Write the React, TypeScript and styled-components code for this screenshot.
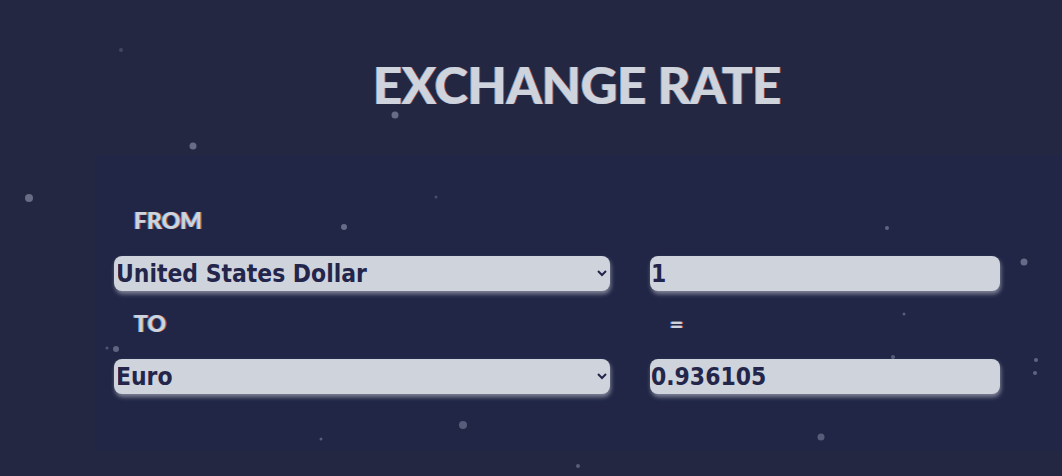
import * as React from "react";
import styled, { createGlobalStyle } from "styled-components";

// global
const GlobalStyle = createGlobalStyle`
  html, body {
    margin: 0;
    padding: 0;
    background: #242742;
    overflow: hidden;
  }
  #root {
    min-height: 476px;
  }
`;

// styles
const PageStyle = styled.main`
  position: relative;
  width: 1062px;
  height: 476px;
  padding-left: 95px;
  box-sizing: border-box;
  overflow: hidden;
`;

const TitleStyle = styled.h1`
  width: 964px;
  margin: 54px 0 0;
  font-family: Lato, "Liberation Sans", sans-serif;
  font-weight: 900;
  font-size: 51px;
  letter-spacing: -0.5px;
  line-height: 61px;
  text-align: center;
  color: #cfd3dc;
  text-shadow: -1px 0 #5a9bd8, 1px 0 #b0503a;
  position: relative;
  z-index: 1;
`;

const CardStyle = styled.section`
  position: relative;
  z-index: 1;
  width: 1000px;
  height: 295px;
  margin-top: 40px;
  padding: 51px 0 0 19px;
  box-sizing: border-box;
  background: #212646;
  display: grid;
  grid-template-columns: 496px 350px;
  column-gap: 40px;
  align-content: start;
`;

const LabelStyle = styled.div<{ $top?: number }>`
  margin: ${(p) => p.$top ?? 0}px 0 22px 20px;
  font-family: Lato, "Liberation Sans", sans-serif;
  font-weight: 900;
  font-size: 23px;
  line-height: 28px;
  height: 28px;
  color: #cfd3dc;
  text-shadow: -1px 0 #5a9bd8, 1px 0 #b0503a;
`;

const fieldCss = `
  width: 100%;
  height: 35px;
  box-sizing: border-box;
  border: none;
  border-radius: 8px;
  background-color: #cfd3dc;
  color: #23264a;
  font-family: "DejaVu Sans Condensed", "DejaVu Sans", Verdana, sans-serif;
  font-stretch: condensed;
  font-weight: bold;
  font-size: 24.4px;
  padding: 0;
  box-shadow: 1px 3px 4px #7f8296;
  outline: none;
`;

const SelectStyle = styled.select`
  ${fieldCss}
  padding-right: 4px;
  text-indent: -2px;
`;

const InputStyle = styled.input`
  ${fieldCss}
  padding-left: 1px;
`;

const StarStyle = styled.span<{ $size: number; $alpha: number }>`
  position: absolute;
  width: ${(p) => p.$size}px;
  height: ${(p) => p.$size}px;
  border-radius: 50%;
  background: rgba(190, 194, 214, ${(p) => p.$alpha});
  transform: translate(-50%, -50%);
  z-index: 2;
`;

const stars: [number, number, number, number][] = [
  [121, 50, 4, 0.2],
  [193, 146, 7, 0.45],
  [29, 198, 8, 0.45],
  [395, 115, 7, 0.45],
  [344, 227, 6, 0.45],
  [436, 197, 3, 0.25],
  [887, 228, 4, 0.4],
  [1024, 262, 7, 0.45],
  [904, 314, 3, 0.35],
  [893, 357, 4, 0.35],
  [1036, 360, 4, 0.4],
  [1035, 373, 4, 0.4],
  [116, 349, 6, 0.4],
  [107, 348, 3, 0.3],
  [463, 425, 8, 0.35],
  [321, 439, 3, 0.35],
  [578, 466, 4, 0.35],
  [821, 437, 7, 0.35],
];

// markup
const App = () => {
  const [from, setFrom] = React.useState("USD");
  const [to, setTo] = React.useState("EUR");
  const [amount, setAmount] = React.useState("1");
  const result = "0.936105";

  return (
    <>
      <GlobalStyle />
      <PageStyle>
        {stars.map(([x, y, s, a], i) => (
          <StarStyle key={i} $size={s} $alpha={a} style={{ left: x, top: y }} />
        ))}
        <TitleStyle>EXCHANGE RATE</TitleStyle>
        <CardStyle>
          <LabelStyle>FROM</LabelStyle>
          <div />
          <SelectStyle value={from} onChange={(e) => setFrom(e.target.value)}>
            <option value="USD">United States Dollar</option>
            <option value="EUR">Euro</option>
          </SelectStyle>
          <InputStyle value={amount} onChange={(e) => setAmount(e.target.value)} />
          <LabelStyle $top={18}>TO</LabelStyle>
          <LabelStyle $top={18}>=</LabelStyle>
          <SelectStyle value={to} onChange={(e) => setTo(e.target.value)}>
            <option value="USD">United States Dollar</option>
            <option value="EUR">Euro</option>
          </SelectStyle>
          <InputStyle value={result} readOnly />
        </CardStyle>
      </PageStyle>
    </>
  );
};

export default App;
